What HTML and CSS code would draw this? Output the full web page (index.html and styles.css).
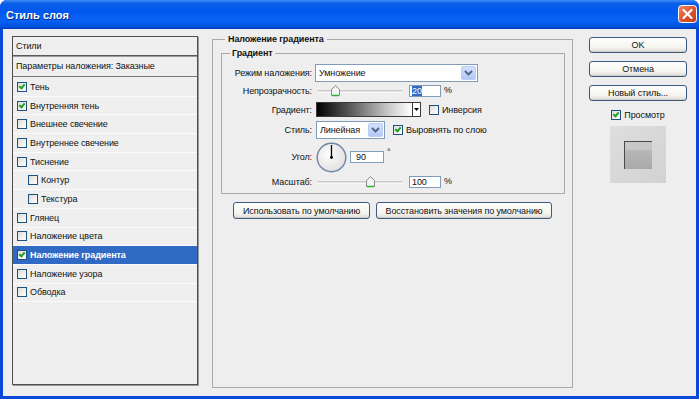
FILE: index.html
```html
<!DOCTYPE html>
<html lang="ru">
<head>
    <meta charset="UTF-8">
    <title>Стиль слоя</title>
    <link rel="stylesheet" href="styles.css">
</head>
<body>
    <div class="window">
        <div class="titlebar">
            <span class="title">Стиль слоя</span>
            <span class="close">
                <svg width="19" height="18" viewBox="0 0 19 18">
                    <defs>
                        <linearGradient id="cg" x1="0" y1="0" x2="1" y2="1">
                            <stop offset="0" stop-color="#ee8b6c"/>
                            <stop offset="0.5" stop-color="#e0552f"/>
                            <stop offset="1" stop-color="#c23a16"/>
                        </linearGradient>
                    </defs>
                    <rect x="0.5" y="0.5" width="18" height="17" rx="3" fill="url(#cg)" stroke="#fff"/>
                    <path d="M5.5 5 L13.5 13 M13.5 5 L5.5 13" stroke="#fff" stroke-width="2.2" stroke-linecap="round"/>
                </svg>
            </span>
        </div>

        <div class="client">
            <div class="styles-list">
                <div class="list-head">Стили</div>
                <div class="list-blend">Параметры наложения: Заказные</div>
                <div class="list-item"><span class="cb checked"></span>Тень</div>
                <div class="list-item"><span class="cb checked"></span>Внутренняя тень</div>
                <div class="list-item"><span class="cb"></span>Внешнее свечение</div>
                <div class="list-item"><span class="cb"></span>Внутреннее свечение</div>
                <div class="list-item"><span class="cb"></span>Тиснение</div>
                <div class="list-item sub"><span class="cb"></span>Контур</div>
                <div class="list-item sub"><span class="cb"></span>Текстура</div>
                <div class="list-item"><span class="cb"></span>Глянец</div>
                <div class="list-item"><span class="cb"></span>Наложение цвета</div>
                <div class="list-item selected"><span class="cb checked"></span>Наложение градиента</div>
                <div class="list-item"><span class="cb"></span>Наложение узора</div>
                <div class="list-item"><span class="cb"></span>Обводка</div>
            </div>

            <fieldset class="group outer">
                <legend>Наложение градиента</legend>
                <fieldset class="group inner">
                    <legend>Градиент</legend>
                    <div class="form">
                        <label class="lbl">Режим наложения:</label>
                        <div class="ctl">
                            <div class="combo wide">
                                <span class="combo-text">Умножение</span>
                                <span class="combo-btn">
                                    <svg width="9" height="6" viewBox="0 0 9 6"><path d="M1 1 L4.5 4.5 L8 1" fill="none" stroke="#4d6185" stroke-width="1.8"/></svg>
                                </span>
                            </div>
                        </div>

                        <label class="lbl">Непрозрачность:</label>
                        <div class="ctl">
                            <svg class="slider" width="86" height="12" viewBox="0 0 86 12">
                                <line x1="1" y1="6" x2="85" y2="6" stroke="#a3a3a3" stroke-width="1"/>
                                <line x1="1" y1="7" x2="85" y2="7" stroke="#fff" stroke-width="1"/>
                                <g transform="translate(14 0)">
                                    <path d="M0.5 4.5 L4.5 0.5 L8.5 4.5 L8.5 10.5 L0.5 10.5 Z" fill="#f3f3f3" stroke="#8a8a8a"/>
                                    <line x1="1" y1="10.5" x2="8" y2="10.5" stroke="#2bb52b" stroke-width="1.5"/>
                                </g>
                            </svg>
                            <span class="field num"><span class="hl">20</span></span>
                            <span class="unit">%</span>
                        </div>

                        <label class="lbl">Градиент:</label>
                        <div class="ctl">
                            <div class="grad">
                                <span class="grad-fill"></span>
                                <span class="grad-btn">
                                    <svg width="5" height="3" viewBox="0 0 5 3"><path d="M0 0 H5 L2.5 3 Z" fill="#000"/></svg>
                                </span>
                            </div>
                            <span class="cb gap"></span><span class="cb-label">Инверсия</span>
                        </div>

                        <label class="lbl">Стиль:</label>
                        <div class="ctl">
                            <div class="combo narrow">
                                <span class="combo-text">Линейная</span>
                                <span class="combo-btn">
                                    <svg width="9" height="6" viewBox="0 0 9 6"><path d="M1 1 L4.5 4.5 L8 1" fill="none" stroke="#4d6185" stroke-width="1.8"/></svg>
                                </span>
                            </div>
                            <span class="cb checked gap"></span><span class="cb-label">Выровнять по слою</span>
                        </div>

                        <label class="lbl">Угол:</label>
                        <div class="ctl">
                            <svg class="dial" width="31" height="31" viewBox="0 0 31 31">
                                <defs>
                                    <radialGradient id="dg" cx="0.4" cy="0.4" r="0.7">
                                        <stop offset="0" stop-color="#ffffff"/>
                                        <stop offset="1" stop-color="#dcdcdc"/>
                                    </radialGradient>
                                </defs>
                                <circle cx="15.5" cy="15.5" r="14.3" fill="url(#dg)" stroke="#6f84a6" stroke-width="1.4"/>
                                <line x1="15.5" y1="15.5" x2="15.5" y2="3" stroke="#000" stroke-width="1.3"/>
                                <circle cx="15.5" cy="15.5" r="1.4" fill="#000"/>
                            </svg>
                            <span class="field angle">90</span>
                            <span class="unit deg">°</span>
                        </div>

                        <label class="lbl">Масштаб:</label>
                        <div class="ctl">
                            <svg class="slider" width="86" height="12" viewBox="0 0 86 12">
                                <line x1="1" y1="6" x2="85" y2="6" stroke="#a3a3a3" stroke-width="1"/>
                                <line x1="1" y1="7" x2="85" y2="7" stroke="#fff" stroke-width="1"/>
                                <g transform="translate(49 0)">
                                    <path d="M0.5 4.5 L4.5 0.5 L8.5 4.5 L8.5 10.5 L0.5 10.5 Z" fill="#f3f3f3" stroke="#8a8a8a"/>
                                    <line x1="1" y1="10.5" x2="8" y2="10.5" stroke="#2bb52b" stroke-width="1.5"/>
                                </g>
                            </svg>
                            <span class="field num">100</span>
                            <span class="unit">%</span>
                        </div>
                    </div>
                </fieldset>

                <div class="defaults">
                    <button class="btn btn-use">Использовать по умолчанию</button>
                    <button class="btn btn-reset">Восстановить значения по умолчанию</button>
                </div>
            </fieldset>

            <div class="side">
                <button class="btn side-btn">OK</button>
                <button class="btn side-btn">Отмена</button>
                <button class="btn side-btn">Новый стиль...</button>
                <div class="preview-check"><span class="cb checked"></span><span class="cb-label">Просмотр</span></div>
                <div class="preview">
                    <div class="preview-swatch"></div>
                </div>
            </div>
        </div>
    </div>
</body>
</html>
```

FILE: styles.css
```css
body {
    margin: 0;
    padding: 0;
    font-family: "Liberation Sans", Arial, sans-serif;
    font-size: 9px;
    letter-spacing: -0.1px;
    color: #111;
    background-color: #fff;
}

.window {
    width: 699px;
    height: 399px;
    box-sizing: border-box;
    display: flex;
    flex-direction: column;
    padding: 0 3px 3px 3px;
    background-color: #0b48d8;
    border-radius: 7px 7px 0 0;
    overflow: hidden;
}

.titlebar {
    height: 29px;
    margin: 0 -3px;
    padding: 0 2px 0 6px;
    display: flex;
    align-items: center;
    justify-content: space-between;
    background: linear-gradient(#3d8cf7 0, #0a5fe8 12%, #0058ee 40%, #0a62f5 70%, #0051dd 92%, #0039b8 100%);
}

.title {
    color: #fff;
    font-size: 11px;
    font-weight: bold;
    letter-spacing: 0;
    text-shadow: 1px 1px 0 #0a2a80;
}

.close {
    display: flex;
    margin-top: -2px;
}

.client {
    flex: 1;
    display: flex;
    align-items: flex-start;
    padding: 7px 9px 0 9px;
    background-color: #eeeeee;
}

/* левый список стилей */
.styles-list {
    width: 186px;
    height: 349px;
    box-sizing: border-box;
    border: 1px solid #4e4e4e;
    box-shadow: 1px 1px 0 #9a9a9a;
    background-color: #efefef;
}

.list-head {
    height: 18px;
    line-height: 18px;
    padding-left: 3px;
    border-bottom: 1px solid #5a5a5a;
    box-shadow: 0 1px 0 #9c9c9c;
}

.list-blend {
    height: 19px;
    line-height: 19px;
    margin-top: 1px;
    padding-left: 3px;
    border-bottom: 1px solid #777;
}

.list-item {
    height: 18.7px;
    box-sizing: border-box;
    display: flex;
    align-items: center;
    padding-left: 4px;
    border-bottom: 1px solid #fbfbfb;
}

.list-item:nth-child(3) {
    margin-top: 1px;
}

.list-item.sub {
    padding-left: 15px;
}

.list-item.selected {
    background-color: #316ac5;
    color: #fff;
    font-weight: bold;
}

.list-item .cb {
    margin-right: 3px;
}

/* флажки */
.cb {
    position: relative;
    display: inline-block;
    flex: none;
    width: 8px;
    height: 8px;
    border: 1px solid #1c5180;
    background: linear-gradient(135deg, #dcdcd7, #ffffff);
}

.cb.checked::after {
    content: "";
    position: absolute;
    left: 2px;
    top: 0;
    width: 2px;
    height: 4px;
    border-right: 2px solid #21a121;
    border-bottom: 2px solid #21a121;
    transform: rotate(40deg);
}

.cb-label {
    margin-left: 3px;
}

/* группы */
.group {
    margin: 0;
    border: 1px solid #a9a9a9;
    min-inline-size: 0;
}

.group legend {
    font-weight: bold;
    height: 12px;
    line-height: 12px;
}

.outer {
    width: 361px;
    height: 355px;
    box-sizing: border-box;
    margin: -3px 0 0 14px;
    padding: 0 7px 0 8px;
}

.outer > legend {
    margin-left: 4px;
    padding: 0 3px;
}

.inner {
    margin-top: 2px;
    padding: 4px 0 3px 0;
}

.inner > legend {
    margin-left: 8px;
    padding: 0 2px;
}

.form {
    display: grid;
    grid-template-columns: 90px 1fr;
    grid-template-rows: 20px 16px 21px 20px 34px 16px;
    column-gap: 3px;
    align-items: center;
}

.lbl {
    text-align: right;
    white-space: nowrap;
}

.ctl {
    display: flex;
    align-items: center;
    height: 100%;
}

.combo {
    height: 18px;
    box-sizing: border-box;
    display: flex;
    align-items: center;
    justify-content: space-between;
    border: 1px solid #7f9db9;
    background-color: #fff;
    padding: 1px 1px 1px 3px;
}

.combo.wide {
    width: 163px;
}

.combo.narrow {
    width: 69px;
    margin-left: 1px;
}

.combo-btn {
    width: 15px;
    height: 14px;
    display: flex;
    align-items: center;
    justify-content: center;
    box-sizing: border-box;
    border: 1px solid #b9cdf6;
    border-radius: 2px;
    background: linear-gradient(#d4e1fd, #b2c8f7);
}

.slider {
    margin-left: 2px;
}

.field {
    height: 12px;
    box-sizing: border-box;
    border: 1px solid #7f9db9;
    background-color: #fff;
    line-height: 10px;
    padding-left: 2px;
}

.field.num {
    width: 32px;
    margin-left: 6px;
}

.field.angle {
    width: 34px;
    margin-left: 3px;
    padding-left: 5px;
}

.hl {
    background-color: #316ac5;
    color: #fff;
}

.unit {
    margin-left: 3px;
    align-self: flex-start;
    margin-top: 2px;
}

.ctl:has(.slider) .unit {
    align-self: center;
    margin-top: -2px;
}

.unit.deg {
    margin-top: 7px;
}

.grad {
    width: 105px;
    height: 15px;
    box-sizing: border-box;
    margin-left: 1px;
    display: flex;
    border: 1px solid #3a3a3a;
    background-color: #fff;
}

.grad-fill {
    flex: 1;
    background: linear-gradient(to right, #000, #5a5a5a 35%, #c9c9c9 75%, #fff);
}

.grad-btn {
    width: 7px;
    display: flex;
    align-items: center;
    justify-content: center;
    border-left: 1px solid #3a3a3a;
}

.cb.gap {
    margin-left: 8px;
}

.dial {
    margin-left: 1px;
}

.defaults {
    display: flex;
    gap: 6px;
    margin: 8px 0 0 12px;
}

/* кнопки */
.btn {
    height: 17px;
    box-sizing: border-box;
    padding: 0;
    font-family: inherit;
    font-size: 9px;
    letter-spacing: -0.1px;
    white-space: nowrap;
    color: #111;
    border: 1px solid #3c5a80;
    border-radius: 3px;
    background: linear-gradient(#ffffff, #f3f3ef 70%, #dedbd3);
    box-shadow: inset 0 -1px 0 #d2cfc6;
}

.btn-use {
    width: 137px;
}

.btn-reset {
    width: 176px;
}

.side {
    width: 98px;
    margin-left: 16px;
    display: flex;
    flex-direction: column;
    align-items: center;
}

.side-btn {
    width: 98px;
    height: 16px;
    margin-top: 1px;
    margin-bottom: 7px;
}

.preview-check {
    display: flex;
    align-items: center;
    margin-top: 0;
    height: 14px;
}

.preview {
    width: 56px;
    height: 57px;
    margin-top: 4px;
    display: flex;
    align-items: center;
    justify-content: center;
    background: linear-gradient(135deg, #dedede, #d2d2d2);
}

.preview-swatch {
    width: 27px;
    height: 27px;
    border-top: 1px solid #4a4a4a;
    border-left: 1px solid #4a4a4a;
    background: linear-gradient(#c7c7c7 0, #c7c7c7 30%, #b7b7b7 31%, #a9a9a9 100%);
}
```
